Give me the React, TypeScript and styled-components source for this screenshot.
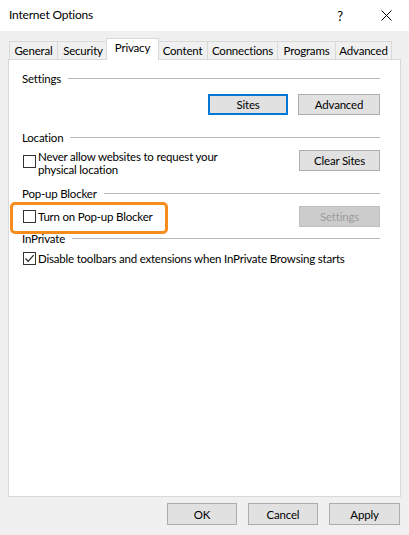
import React from "react";
import styled, { createGlobalStyle, css } from "styled-components";

const Global = createGlobalStyle`
  html, body { margin: 0; padding: 0; background: #ffffff; }
  body {
    font-family: Lato, "Noto Sans", sans-serif;
    font-size: 11.5px;
    letter-spacing: -0.2px;
    color: #000;
  }
`;

const Window = styled.div`
  width: 409px;
  height: 535px;
  display: flex;
  flex-direction: column;
  background: #f0f0f0;
  overflow: hidden;
`;

const TitleBar = styled.div`
  height: 31px;
  flex: none;
  display: flex;
  align-items: center;
  background: #ffffff;
  padding-left: 9px;
`;

const Title = styled.div`
  flex: 1;
  font-size: 12px;
  line-height: 16px;
  padding-bottom: 1px;
`;

const CaptionButton = styled.div`
  width: 46px;
  height: 31px;
  display: flex;
  align-items: center;
  justify-content: center;
  font-size: 13px;
  color: #000;
`;

const Body = styled.div`
  flex: 1;
  display: flex;
  flex-direction: column;
  padding: 7px 8px 0 8px;
  min-height: 0;
`;

const TabStrip = styled.div`
  height: 21px;
  flex: none;
  display: flex;
  align-items: flex-end;
  padding-left: 1px;
`;

const Tab = styled.div<{ $w: number; $active?: boolean }>`
  box-sizing: border-box;
  width: ${(p) => p.$w}px;
  height: 18px;
  border: 1px solid #d9d9d9;
  border-bottom: none;
  margin-right: -1px;
  background: #f0f0f0;
  display: flex;
  align-items: center;
  justify-content: center;
  line-height: 14px;
  white-space: nowrap;
  ${(p) =>
    p.$active &&
    css`
      height: 22px;
      margin: 0 -2px -1px -2px;
      width: ${p.$w + 3}px;
      background: #ffffff;
      position: relative;
      z-index: 1;
      padding-bottom: 4px;
    `}
`;

const Panel = styled.div`
  flex: 1;
  background: #ffffff;
  border: 1px solid #d9d9d9;
  padding: 10px 20px 0 13px;
  display: flex;
  flex-direction: column;
`;

const GroupHeader = styled.div<{ $mt: number }>`
  height: 16px;
  margin-top: ${(p) => p.$mt}px;
  display: flex;
  align-items: center;
  gap: 7px;
  white-space: nowrap;
`;

const Rule = styled.div`
  flex: 1;
  height: 1px;
  background: #b9b9b9;
`;

const Row = styled.div<{ $mt: number; $align?: string; $justify?: string }>`
  margin-top: ${(p) => p.$mt}px;
  display: flex;
  align-items: ${(p) => p.$align || "center"};
  justify-content: ${(p) => p.$justify || "space-between"};
  gap: 10px;
`;

const Button = styled.div<{ $w: number; $h?: number; $focused?: boolean; $disabled?: boolean }>`
  box-sizing: border-box;
  width: ${(p) => p.$w}px;
  height: ${(p) => p.$h || 21}px;
  flex: none;
  display: flex;
  align-items: center;
  justify-content: center;
  background: #e1e1e1;
  border: 1px solid #adadad;
  color: #000;
  ${(p) =>
    p.$focused &&
    css`
      border: 2px solid #0078d7;
    `}
  ${(p) =>
    p.$disabled &&
    css`
      background: #cccccc;
      border-color: #bfbfbf;
      color: #9d9d9d;
    `}
`;

const CheckLabel = styled.div<{ $top?: boolean }>`
  display: flex;
  align-items: ${(p) => (p.$top ? "flex-start" : "center")};
  gap: 2px;
  margin-left: 1px;
`;

const Box = styled.div<{ $mt?: number }>`
  box-sizing: border-box;
  width: 13px;
  height: 13px;
  flex: none;
  margin-top: ${(p) => p.$mt || 0}px;
  border: 1px solid #333333;
  background: #ffffff;
  display: flex;
  align-items: center;
  justify-content: center;
`;

const LabelText = styled.div`
  line-height: 13px;
  white-space: nowrap;
`;

const Highlight = styled.div`
  position: relative;
  &::after {
    content: "";
    position: absolute;
    top: -8px;
    left: -12px;
    bottom: -11px;
    right: -15px;
    border: 3px solid #f78c1e;
    border-radius: 5px;
    pointer-events: none;
  }
`;

const Footer = styled.div`
  height: 38px;
  flex: none;
  box-sizing: border-box;
  display: flex;
  justify-content: flex-end;
  align-items: flex-start;
  gap: 11px;
  padding: 6px 9px 0 0;
`;

function Checkbox({ checked, mt }: { checked?: boolean; mt?: number }) {
  return (
    <Box $mt={mt}>
      {checked && (
        <svg width="11" height="11" viewBox="0 0 11 11">
          <path d="M1.5 5.5 L4.2 8.3 L9.6 2.2" fill="none" stroke="#222" strokeWidth="1.2" />
        </svg>
      )}
    </Box>
  );
}

const tabs: { label: string; w: number; active?: boolean }[] = [
  { label: "General", w: 49 },
  { label: "Security", w: 52 },
  { label: "Privacy", w: 50, active: true },
  { label: "Content", w: 51 },
  { label: "Connections", w: 71 },
  { label: "Programs", w: 59 },
  { label: "Advanced", w: 57 },
];

export default function App() {
  return (
    <>
      <Global />
      <Window>
        <TitleBar>
          <Title>Internet Options</Title>
          <CaptionButton>?</CaptionButton>
          <CaptionButton>
            <svg width="11" height="11" viewBox="0 0 11 11">
              <path d="M0.5 0.5 L10.5 10.5 M10.5 0.5 L0.5 10.5" stroke="#000" strokeWidth="1" />
            </svg>
          </CaptionButton>
        </TitleBar>
        <Body>
          <TabStrip>
            {tabs.map((t) => (
              <Tab key={t.label} $w={t.w} $active={t.active}>
                {t.label}
              </Tab>
            ))}
          </TabStrip>
          <Panel>
            <GroupHeader $mt={0}>
              Settings
              <Rule />
            </GroupHeader>
            <Row $mt={8} $justify="flex-end">
              <Button $w={80} $focused>
                Sites
              </Button>
              <Button $w={82}>Advanced</Button>
            </Row>

            <GroupHeader $mt={14}>
              Location
              <Rule />
            </GroupHeader>
            <Row $mt={5} $align="flex-start">
              <CheckLabel $top>
                <Checkbox mt={5} />
                <LabelText>
                  Never allow websites to request your
                  <br />
                  physical location
                </LabelText>
              </CheckLabel>
              <Button $w={81}>Clear Sites</Button>
            </Row>

            <GroupHeader $mt={9}>
              Pop-up Blocker
              <Rule />
            </GroupHeader>
            <Row $mt={5}>
              <Highlight>
                <CheckLabel>
                  <Checkbox />
                  <LabelText>Turn on Pop-up Blocker</LabelText>
                </CheckLabel>
              </Highlight>
              <Button $w={81} $disabled>
                Settings
              </Button>
            </Row>

            <GroupHeader $mt={3}>
              InPrivate
              <Rule />
            </GroupHeader>
            <Row $mt={6} $justify="flex-start">
              <CheckLabel>
                <Checkbox checked />
                <LabelText>Disable toolbars and extensions when InPrivate Browsing starts</LabelText>
              </CheckLabel>
            </Row>
          </Panel>
        </Body>
        <Footer>
          <Button $w={70} $h={22}>OK</Button>
          <Button $w={70} $h={22}>Cancel</Button>
          <Button $w={71} $h={22}>Apply</Button>
        </Footer>
      </Window>
    </>
  );
}
